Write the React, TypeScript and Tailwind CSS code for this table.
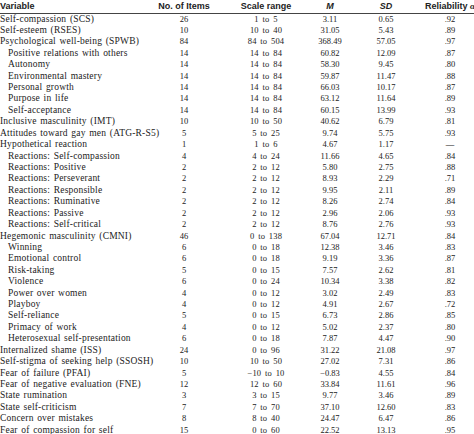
type Row = {
  name: string;
  sub?: boolean;
  items: string;
  range: string;
  m: string;
  sd: string;
  rel: string;
};

const rows: Row[] = [
  { name: 'Self-compassion (SCS)', items: '26', range: '1 to 5', m: '3.11', sd: '0.65', rel: '.92' },
  { name: 'Self-esteem (RSES)', items: '10', range: '10 to 40', m: '31.05', sd: '5.43', rel: '.89' },
  { name: 'Psychological well-being (SPWB)', items: '84', range: '84 to 504', m: '368.49', sd: '57.05', rel: '.97' },
  { name: 'Positive relations with others', sub: true, items: '14', range: '14 to 84', m: '60.82', sd: '12.09', rel: '.87' },
  { name: 'Autonomy', sub: true, items: '14', range: '14 to 84', m: '58.30', sd: '9.45', rel: '.80' },
  { name: 'Environmental mastery', sub: true, items: '14', range: '14 to 84', m: '59.87', sd: '11.47', rel: '.88' },
  { name: 'Personal growth', sub: true, items: '14', range: '14 to 84', m: '66.03', sd: '10.17', rel: '.87' },
  { name: 'Purpose in life', sub: true, items: '14', range: '14 to 84', m: '63.12', sd: '11.64', rel: '.89' },
  { name: 'Self-acceptance', sub: true, items: '14', range: '14 to 84', m: '60.15', sd: '13.99', rel: '.93' },
  { name: 'Inclusive masculinity (IMT)', items: '10', range: '10 to 50', m: '40.62', sd: '6.79', rel: '.81' },
  { name: 'Attitudes toward gay men (ATG-R-S5)', items: '5', range: '5 to 25', m: '9.74', sd: '5.75', rel: '.93' },
  { name: 'Hypothetical reaction', items: '1', range: '1 to 6', m: '4.67', sd: '1.17', rel: '—' },
  { name: 'Reactions: Self-compassion', sub: true, items: '4', range: '4 to 24', m: '11.66', sd: '4.65', rel: '.84' },
  { name: 'Reactions: Positive', sub: true, items: '2', range: '2 to 12', m: '5.80', sd: '2.75', rel: '.88' },
  { name: 'Reactions: Perseverant', sub: true, items: '2', range: '2 to 12', m: '8.93', sd: '2.29', rel: '.71' },
  { name: 'Reactions: Responsible', sub: true, items: '2', range: '2 to 12', m: '9.95', sd: '2.11', rel: '.89' },
  { name: 'Reactions: Ruminative', sub: true, items: '2', range: '2 to 12', m: '8.26', sd: '2.74', rel: '.84' },
  { name: 'Reactions: Passive', sub: true, items: '2', range: '2 to 12', m: '2.96', sd: '2.06', rel: '.93' },
  { name: 'Reactions: Self-critical', sub: true, items: '2', range: '2 to 12', m: '8.76', sd: '2.76', rel: '.93' },
  { name: 'Hegemonic masculinity (CMNI)', items: '46', range: '0 to 138', m: '67.04', sd: '12.71', rel: '.84' },
  { name: 'Winning', sub: true, items: '6', range: '0 to 18', m: '12.38', sd: '3.46', rel: '.83' },
  { name: 'Emotional control', sub: true, items: '6', range: '0 to 18', m: '9.19', sd: '3.36', rel: '.87' },
  { name: 'Risk-taking', sub: true, items: '5', range: '0 to 15', m: '7.57', sd: '2.62', rel: '.81' },
  { name: 'Violence', sub: true, items: '6', range: '0 to 24', m: '10.34', sd: '3.38', rel: '.82' },
  { name: 'Power over women', sub: true, items: '4', range: '0 to 12', m: '3.02', sd: '2.49', rel: '.83' },
  { name: 'Playboy', sub: true, items: '4', range: '0 to 12', m: '4.91', sd: '2.67', rel: '.72' },
  { name: 'Self-reliance', sub: true, items: '5', range: '0 to 15', m: '6.73', sd: '2.86', rel: '.85' },
  { name: 'Primacy of work', sub: true, items: '4', range: '0 to 12', m: '5.02', sd: '2.37', rel: '.80' },
  { name: 'Heterosexual self-presentation', sub: true, items: '6', range: '0 to 18', m: '7.87', sd: '4.47', rel: '.90' },
  { name: 'Internalized shame (ISS)', items: '24', range: '0 to 96', m: '31.22', sd: '21.08', rel: '.97' },
  { name: 'Self-stigma of seeking help (SSOSH)', items: '10', range: '10 to 50', m: '27.02', sd: '7.31', rel: '.86' },
  { name: 'Fear of failure (PFAI)', items: '5', range: '−10 to 10', m: '−0.83', sd: '4.55', rel: '.84' },
  { name: 'Fear of negative evaluation (FNE)', items: '12', range: '12 to 60', m: '33.84', sd: '11.61', rel: '.96' },
  { name: 'State rumination', items: '3', range: '3 to 15', m: '9.77', sd: '3.46', rel: '.89' },
  { name: 'State self-criticism', items: '7', range: '7 to 70', m: '37.10', sd: '12.60', rel: '.83' },
  { name: 'Concern over mistakes', items: '8', range: '8 to 40', m: '24.47', sd: '6.47', rel: '.86' },
  { name: 'Fear of compassion for self', items: '15', range: '0 to 60', m: '22.52', sd: '13.13', rel: '.95' },
];

export default function App() {
  return (
    <div className="w-[474px] h-[434px] overflow-hidden bg-white text-[#222]">
      <table className="w-[484px] table-fixed border-collapse">
        <colgroup>
          <col className="w-[140px]" />
          <col className="w-[88px]" />
          <col className="w-[76px]" />
          <col className="w-[52px]" />
          <col className="w-[60px]" />
          <col className="w-[68px]" />
        </colgroup>
        <thead>
          <tr className="h-[13px] border-b border-[#444] font-['Liberation_Sans',Arial,sans-serif] text-[9px] font-bold leading-[12px]">
            <th className="p-0 text-left align-top">Variable</th>
            <th className="p-0 text-center align-top">No. of Items</th>
            <th className="p-0 text-center align-top">Scale range</th>
            <th className="p-0 text-center align-top italic">M</th>
            <th className="p-0 text-center align-top italic">SD</th>
            <th className="p-0 text-center align-top whitespace-nowrap">
              Reliability <span className="font-['Liberation_Serif',serif] italic">α</span>
            </th>
          </tr>
        </thead>
        <tbody className="font-['Liberation_Serif','Times_New_Roman',serif] text-[8.5px] leading-[11.42px]">
          {rows.map((r) => (
            <tr key={r.name} className="h-[11.42px]">
              <td
                className={`p-0 whitespace-nowrap text-[9.5px] tracking-[0.2px] [word-spacing:1px] ${
                  r.sub ? 'pl-[8px]' : 'pl-0'
                }`}
              >
                {r.name}
              </td>
              <td className="p-0 text-center">{r.items}</td>
              <td className="p-0 text-center whitespace-nowrap tracking-[0.15px] [word-spacing:1.5px]">{r.range}</td>
              <td className="p-0 text-center">{r.m}</td>
              <td className="p-0 text-center">{r.sd}</td>
              <td className="p-0 text-center">{r.rel}</td>
            </tr>
          ))}
        </tbody>
      </table>
    </div>
  );
}
